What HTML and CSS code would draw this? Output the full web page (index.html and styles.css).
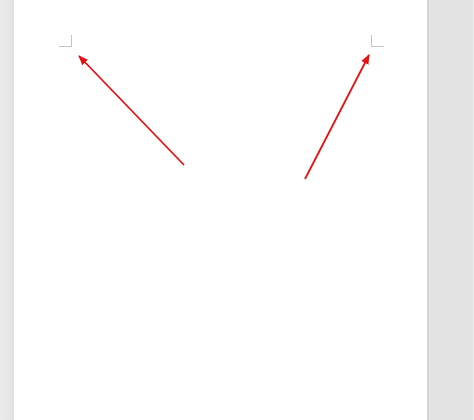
FILE: index.html
```html
<!DOCTYPE html>
<html>
<head>
<meta charset="utf-8">
<link rel="stylesheet" href="styles.css">
</head>
<body>
<div class="app">
  <div class="gutter-left"></div>
  <div class="page">
    <div class="mark mark-tl"></div>
    <div class="mark mark-tr"></div>
  </div>
  <div class="gutter-right"></div>
</div>
<svg class="arrows" width="474" height="420" viewBox="0 0 474 420">
  <defs>
    <marker id="ah" viewBox="0 0 10 10" refX="9" refY="5" markerWidth="5.5" markerHeight="5.5" orient="auto">
      <path d="M0,1 L10,5 L0,9 Z" fill="#e41212"/>
    </marker>
  </defs>
  <line x1="184" y1="165" x2="79" y2="56" stroke="#e41212" stroke-width="1.8" marker-end="url(#ah)"/>
  <line x1="305" y1="179" x2="369" y2="55" stroke="#e41212" stroke-width="1.8" marker-end="url(#ah)"/>
</svg>
</body>
</html>
```
FILE: styles.css
```css
html, body {
  margin: 0;
  padding: 0;
  width: 474px;
  height: 420px;
  overflow: hidden;
  background: #e4e4e4;
}
.app {
  display: flex;
  height: 420px;
}
.gutter-left {
  width: 14px;
  background: linear-gradient(to right, #ececec, #e6e6e6 70%, #dedede);
}
.page {
  position: relative;
  width: 413px;
  background: #ffffff;
}
.gutter-right {
  flex: 1;
  background: #e3e3e3;
  border-left: 2px solid #d6d6d6;
  border-right: 1px solid #ececec;
}
.mark {
  position: absolute;
  top: 35px;
  width: 12px;
  height: 11px;
  border-bottom: 1px solid #c4c4c4;
}
.mark-tl {
  left: 45px;
  border-right: 1px solid #c4c4c4;
}
.mark-tr {
  left: 357px;
  border-left: 1px solid #c4c4c4;
}
.arrows {
  position: absolute;
  left: 0;
  top: 0;
}
```
